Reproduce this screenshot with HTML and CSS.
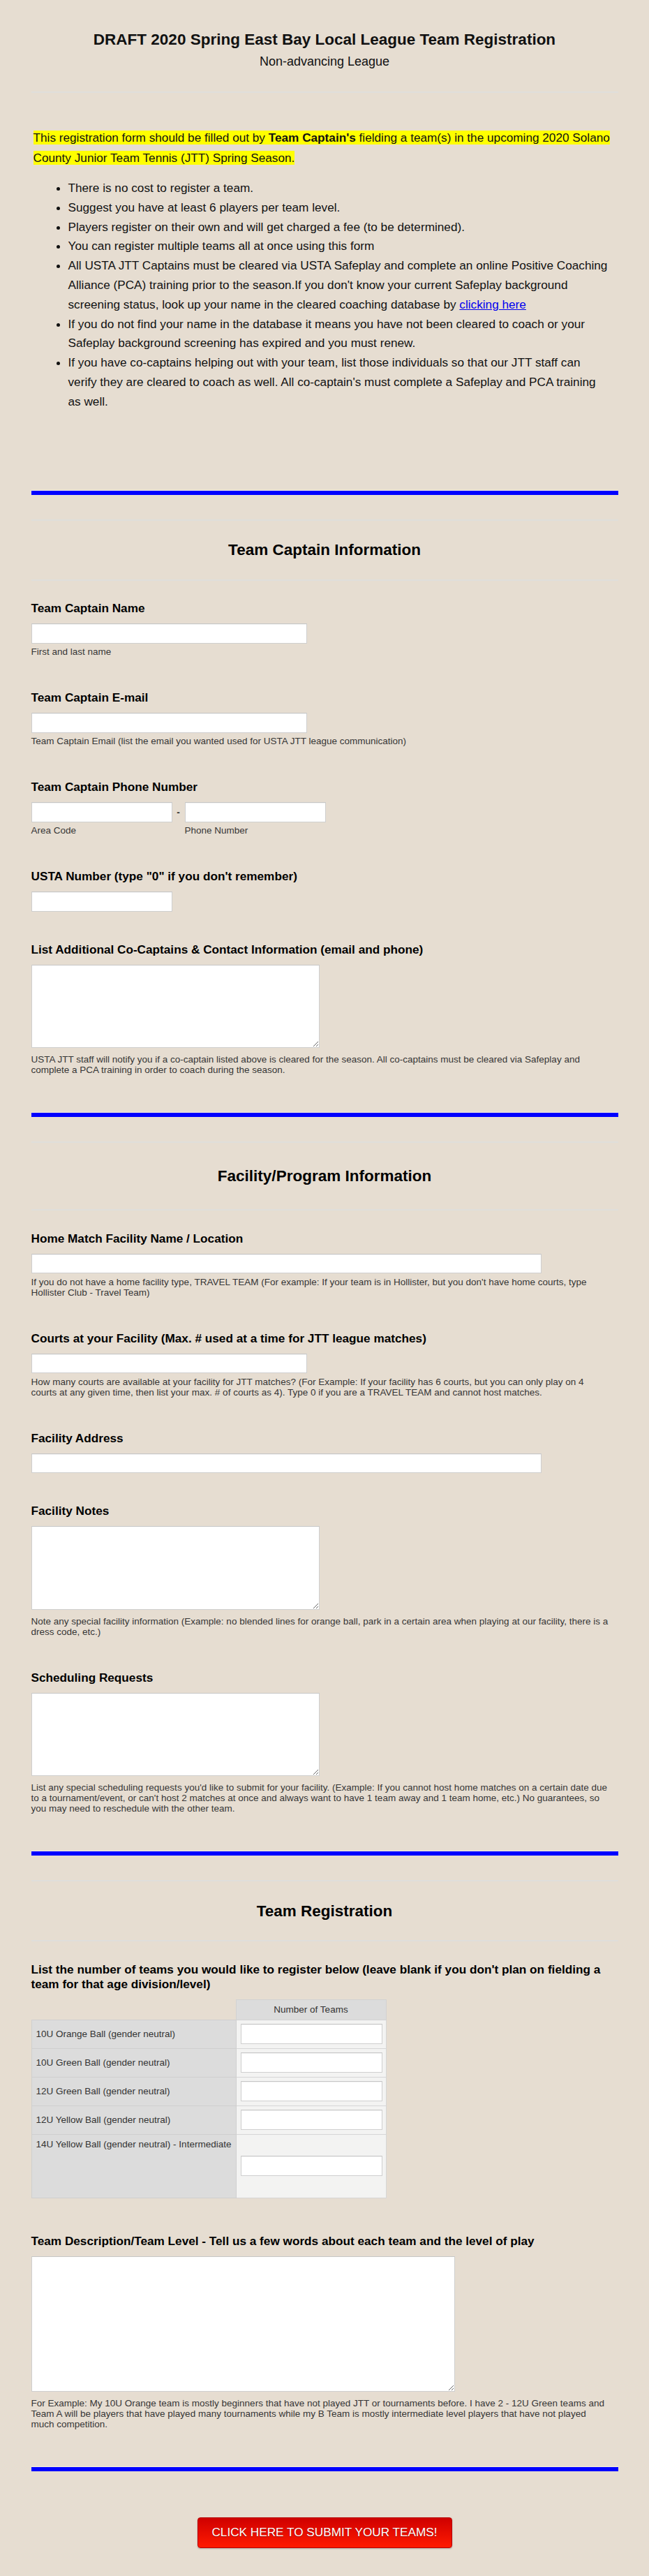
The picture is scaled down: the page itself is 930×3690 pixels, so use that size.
FILE: index.html
```html
<!DOCTYPE html>
<html lang="en">
<head>
<meta charset="utf-8">
<title>DRAFT 2020 Spring East Bay Local League Team Registration</title>
<link rel="stylesheet" href="styles.css">
</head>
<body>
<div class="page">
  <header class="form-header">
    <h1 class="title">DRAFT 2020 Spring East Bay Local League Team Registration</h1>
    <p class="subtitle">Non-advancing League</p>
  </header>
  <div class="rule rule-top"></div>

  <div class="intro">
    <p class="intro-lead"><span class="hl">This registration form should be filled out by <strong>Team Captain's</strong> fielding a team(s) in the upcoming 2020 Solano County Junior Team Tennis (JTT) Spring Season.</span></p>
    <ul class="notes">
      <li>There is no cost to register a team.</li>
      <li>Suggest you have at least 6 players per team level.</li>
      <li>Players register on their own and will get charged a fee (to be determined).</li>
      <li>You can register multiple teams all at once using this form</li>
      <li>All USTA JTT Captains must be cleared via USTA Safeplay and complete an online Positive Coaching Alliance (PCA) training prior to the season.If you don't know your current Safeplay background screening status, look up your name in the cleared coaching database by <a href="#">clicking here</a></li>
      <li>If you do not find your name in the database it means you have not been cleared to coach or your Safeplay background screening has expired and you must renew.</li>
      <li>If you have co-captains helping out with your team, list those individuals so that our JTT staff can<br>verify they are cleared to coach as well. All co-captain's must complete a Safeplay and PCA training<br>as well.</li>
    </ul>
  </div>

  <div class="bar bar-first"></div>

  <section class="section">
    <div class="section-head"><h2>Team Captain Information</h2></div>
    <div class="fields">
      <div class="field">
        <label class="label">Team Captain Name</label>
        <input class="input w-md" type="text">
        <div class="help">First and last name</div>
      </div>
      <div class="field">
        <label class="label">Team Captain E-mail</label>
        <input class="input w-md" type="email">
        <div class="help">Team Captain Email (list the email you wanted used for USTA JTT league communication)</div>
      </div>
      <div class="field">
        <label class="label">Team Captain Phone Number</label>
        <div class="phone">
          <div class="phone-part">
            <input class="input w-sm" type="tel">
            <div class="help">Area Code</div>
          </div>
          <span class="dash">-</span>
          <div class="phone-part">
            <input class="input w-sm" type="tel">
            <div class="help">Phone Number</div>
          </div>
        </div>
      </div>
      <div class="field">
        <label class="label">USTA Number (type "0" if you don't remember)</label>
        <input class="input w-sm" type="text">
      </div>
      <div class="field">
        <label class="label">List Additional Co-Captains &amp; Contact Information (email and phone)</label>
        <textarea class="textarea"></textarea>
        <div class="help">USTA JTT staff will notify you if a co-captain listed above is cleared for the season. All co-captains must be cleared via Safeplay and complete a PCA training in order to coach during the season.</div>
      </div>
    </div>
  </section>

  <div class="bar"></div>

  <section class="section">
    <div class="section-head tall"><h2>Facility/Program Information</h2></div>
    <div class="fields">
      <div class="field">
        <label class="label">Home Match Facility Name / Location</label>
        <input class="input w-lg" type="text">
        <div class="help">If you do not have a home facility type, TRAVEL TEAM (For example: If your team is in Hollister, but you don't have home courts, type Hollister Club - Travel Team)</div>
      </div>
      <div class="field">
        <label class="label">Courts at your Facility (Max. # used at a time for JTT league matches)</label>
        <input class="input w-md" type="text">
        <div class="help">How many courts are available at your facility for JTT matches? (For Example: If your facility has 6 courts, but you can only play on 4<br>courts at any given time, then list your max. # of courts as 4). Type 0 if you are a TRAVEL TEAM and cannot host matches.</div>
      </div>
      <div class="field">
        <label class="label">Facility Address</label>
        <input class="input w-lg" type="text">
      </div>
      <div class="field">
        <label class="label">Facility Notes</label>
        <textarea class="textarea"></textarea>
        <div class="help">Note any special facility information (Example: no blended lines for orange ball, park in a certain area when playing at our facility, there is a dress code, etc.)</div>
      </div>
      <div class="field">
        <label class="label">Scheduling Requests</label>
        <textarea class="textarea"></textarea>
        <div class="help">List any special scheduling requests you'd like to submit for your facility. (Example: If you cannot host home matches on a certain date due to a tournament/event, or can't host 2 matches at once and always want to have 1 team away and 1 team home, etc.) No guarantees, so you may need to reschedule with the other team.</div>
      </div>
    </div>
  </section>

  <div class="bar"></div>

  <section class="section">
    <div class="section-head"><h2>Team Registration</h2></div>
    <div class="fields">
      <div class="field">
        <label class="label">List the number of teams you would like to register below (leave blank if you don't plan on fielding a team for that age division/level)</label>
        <table class="teams">
          <colgroup><col class="c-name"><col class="c-num"></colgroup>
          <thead>
            <tr><th class="blank"></th><th class="col-head">Number of Teams</th></tr>
          </thead>
          <tbody>
            <tr><td class="name">10U Orange Ball (gender neutral)</td><td class="cell"><input class="input cell-input" type="text"></td></tr>
            <tr><td class="name">10U Green Ball (gender neutral)</td><td class="cell"><input class="input cell-input" type="text"></td></tr>
            <tr><td class="name">12U Green Ball (gender neutral)</td><td class="cell"><input class="input cell-input" type="text"></td></tr>
            <tr><td class="name">12U Yellow Ball (gender neutral)</td><td class="cell"><input class="input cell-input" type="text"></td></tr>
            <tr class="tall-row"><td class="name">14U Yellow Ball (gender neutral) - Intermediate</td><td class="cell"><input class="input cell-input" type="text"></td></tr>
          </tbody>
        </table>
      </div>
      <div class="field">
        <label class="label">Team Description/Team Level - Tell us a few words about each team and the level of play</label>
        <textarea class="textarea big"></textarea>
        <div class="help">For Example: My 10U Orange team is mostly beginners that have not played JTT or tournaments before. I have 2 - 12U Green teams and Team A will be players that have played many tournaments while my B Team is mostly intermediate level players that have not played<br>much competition.</div>
      </div>
    </div>
  </section>

  <div class="bar"></div>

  <div class="submit-wrap">
    <button class="submit" type="submit">CLICK HERE TO SUBMIT YOUR TEAMS!</button>
  </div>
</div>
</body>
</html>
```

FILE: styles.css
```css
html, body {
  margin: 0;
  padding: 0;
}

body {
  background: #e6ddd1;
  font-family: "Liberation Sans", Arial, sans-serif;
  color: #000;
}

.page {
  width: 841px;
  margin: 0 auto;
  padding: 43px 0 45px;
}

.title {
  margin: 0;
  font-size: 22.5px;
  line-height: 28px;
  font-weight: bold;
  text-align: center;
  color: #111;
}

.subtitle {
  margin: 6px 0 0;
  font-size: 18px;
  line-height: 22px;
  text-align: center;
  color: #111;
}

.rule {
  height: 2px;
  background: #dfdedb;
}

.rule-top {
  margin-top: 32px;
}

.intro {
  padding: 0 4.5px 0 3px;
  font-size: 17.2px;
  color: #111;
}

.intro-lead {
  margin: 49.5px 0 0;
  line-height: 29px;
}

.hl {
  background: #ffff00;
}

.notes {
  margin: 15.6px 0 0;
  padding-left: 50px;
  line-height: 27.8px;
}

.notes a {
  color: #0000ee;
  text-decoration: underline;
}

.bar {
  height: 6px;
  background: #0000ff;
  border-top: 1px solid #efeae2;
  margin-top: 49px;
}

.bar-first {
  margin-top: 112px;
}

.section-head {
  margin-top: 35px;
  border-top: 2px solid #dfdedb;
  border-bottom: 2px solid #dfdedb;
}

.section-head h2 {
  margin: 0;
  padding: 28.5px 0;
  font-size: 22.5px;
  line-height: 27px;
  font-weight: bold;
  text-align: center;
  color: #000;
}

.section-head.tall h2 {
  padding: 34px 0;
}

.fields {
  display: flex;
  flex-direction: column;
  gap: 44px;
  margin-top: 29.5px;
  padding-right: 6px;
}

.field {
  display: flex;
  flex-direction: column;
  align-items: flex-start;
}

.label {
  display: block;
  font-size: 17.2px;
  line-height: 21px;
  font-weight: bold;
  color: #000;
  margin-bottom: 11px;
}

.input {
  display: block;
  box-sizing: border-box;
  height: 28.5px;
  margin: 0;
  padding: 0 5px;
  border: 1px solid #cfcfcf;
  border-top-color: #c6c6c6;
  background: #fff;
  box-shadow: inset 0 1px 1px rgba(0, 0, 0, 0.05);
  font: 13.5px "Liberation Sans", Arial, sans-serif;
  border-radius: 0;
  outline: none;
}

.w-sm { width: 202px; }
.w-md { width: 395px; }
.w-lg { width: 731px; }

.textarea {
  display: block;
  box-sizing: border-box;
  width: 413px;
  height: 119.5px;
  margin: 0;
  padding: 5px;
  border: 1px solid #cfcfcf;
  border-top-color: #c6c6c6;
  background: #fff;
  font: 13.5px "Liberation Sans", Arial, sans-serif;
  resize: both;
  border-radius: 0;
  outline: none;
}

.textarea.big {
  width: 607px;
  height: 194px;
}

.help {
  margin-top: 4.5px;
  padding-bottom: 4px;
  font-size: 13.5px;
  line-height: 15px;
  color: #363636;
}

.textarea + .help {
  margin-top: 9px;
}

.phone {
  display: flex;
  align-items: flex-start;
}

.phone-part {
  display: flex;
  flex-direction: column;
}

.dash {
  width: 18px;
  text-align: center;
  font-size: 13.5px;
  font-weight: bold;
  line-height: 30px;
  color: #222;
}

.teams {
  border-collapse: collapse;
  table-layout: fixed;
  width: 508px;
  margin-bottom: 7px;
  font-size: 13.5px;
  color: #333;
}

.c-name { width: 293px; }
.c-num { width: 215px; }

.teams th,
.teams td {
  padding: 0 6px;
}

.teams th.blank {
  border: none;
  background: transparent;
}

.teams th.col-head {
  height: 28px;
  background: #dcdcdc;
  border: 1px solid #d2d2d2;
  font-weight: normal;
  text-align: center;
  vertical-align: middle;
}

.teams td.name {
  height: 40px;
  background: #dcdcdc;
  border: 1px solid #cfcfcf;
  vertical-align: middle;
  white-space: nowrap;
}

.teams td.cell {
  background: #f3f3f2;
  border: 1px solid #d6d6d6;
  vertical-align: middle;
}

.cell-input {
  width: 203px;
}

.teams .tall-row td.name {
  height: 84px;
  vertical-align: top;
  padding-top: 6px;
  line-height: 15px;
}

.submit-wrap {
  display: flex;
  justify-content: center;
  margin-top: 66px;
}

.submit {
  width: 365px;
  height: 44px;
  margin: 0;
  padding: 0;
  border: 1px solid #b80000;
  border-radius: 4px;
  background: linear-gradient(#cf0000, #ff1a00);
  box-shadow: 0 1px 2px rgba(0, 0, 0, 0.25);
  color: #fff;
  font: 17.2px "Liberation Sans", Arial, sans-serif;
  text-shadow: 0 1px 1px rgba(0, 0, 0, 0.35);
  cursor: pointer;
}
```
